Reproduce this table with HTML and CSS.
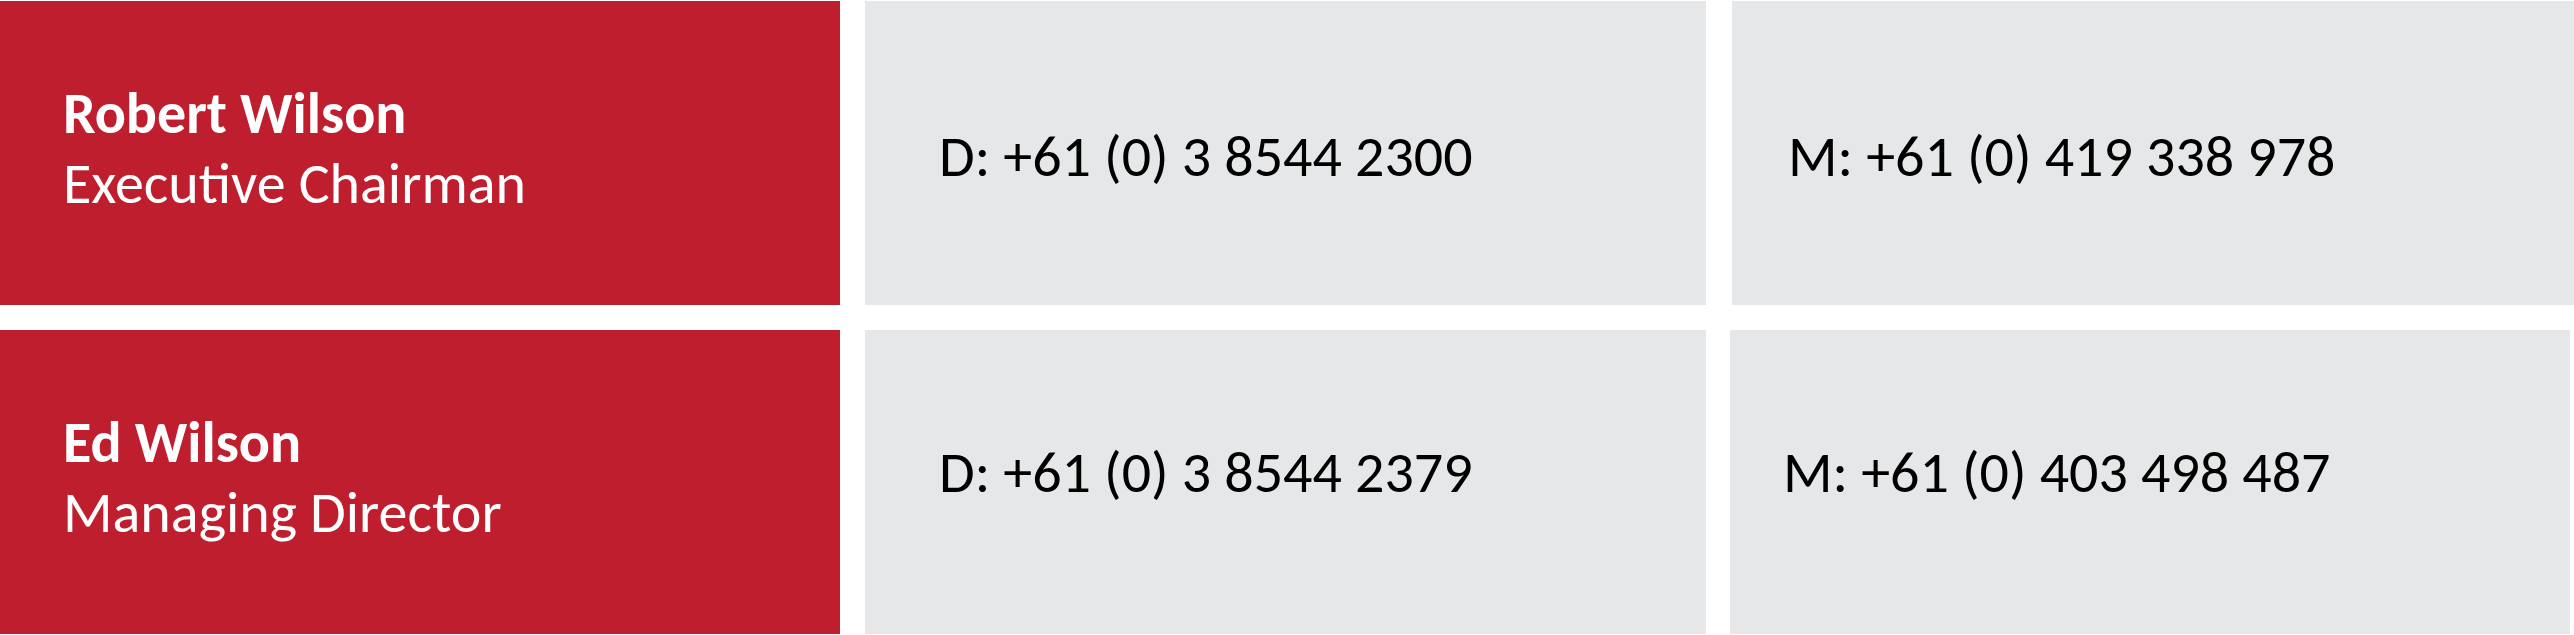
FILE: index.html
```html
<!DOCTYPE html>
<html lang="en">
<head>
<meta charset="utf-8">
<title>Contacts</title>
<link rel="stylesheet" href="styles.css">
</head>
<body>
<div class="table">
  <div class="row row-a">
    <div class="cell person">
      <div class="name">Robert Wilson</div>
      <div class="role">Executive Chairman</div>
    </div>
    <div class="cell phone direct">D: +61 (0) 3 8544 2300</div>
    <div class="cell phone mobile">M: +61 (0) 419 338 978</div>
  </div>
  <div class="row row-b">
    <div class="cell person">
      <div class="name">Ed Wilson</div>
      <div class="role">Managing Director</div>
    </div>
    <div class="cell phone direct">D: +61 (0) 3 8544 2379</div>
    <div class="cell phone mobile">M: +61 (0) 403 498 487</div>
  </div>
</div>
</body>
</html>
```
FILE: styles.css
```css
html, body {
  margin: 0;
  padding: 0;
  background: #ffffff;
}
body {
  font-family: Carlito, Calibri, "Liberation Sans", sans-serif;
  font-size: 58px;
  line-height: 70px;
  color: #000000;
}
.table {
  display: flex;
  flex-direction: column;
  gap: 25px;
  padding-top: 1px;
  width: 2574px;
}
.row {
  display: flex;
  height: 304px;
}
.cell {
  box-sizing: border-box;
  flex: none;
}
.cell.person {
  width: 840px;
  margin-right: 25px;
  padding: 78px 0 0 63px;
  background: #be1e2d;
  color: #ffffff;
}
.name { font-weight: 700; }
.role { font-weight: 400; }
.phone {
  background: #e6e7e8;
  white-space: nowrap;
}
.cell.direct { width: 841px; }
.row-a .direct { margin-right: 26px; padding: 121px 0 0 74px; }
.row-a .mobile { width: 842px; padding: 121px 0 0 56px; }
.row-b .direct { margin-right: 24px; padding: 108px 0 0 74px; }
.row-b .mobile { width: 840px; padding: 108px 0 0 53px; }
```
